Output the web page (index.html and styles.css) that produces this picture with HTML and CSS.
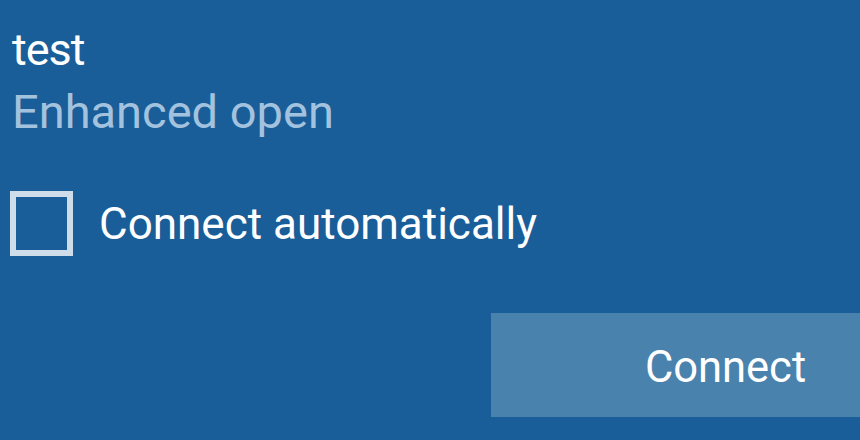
FILE: index.html
```html
<!DOCTYPE html>
<html lang="en">
<head>
<meta charset="utf-8">
<title>Network</title>
<link rel="stylesheet" href="styles.css">
</head>
<body>
<div class="flyout">
  <div class="network">
    <div class="name">test</div>
    <div class="security">Enhanced open</div>
    <label class="auto">
      <span class="box"></span>
      <span class="auto-text">Connect automatically</span>
    </label>
  </div>
  <div class="actions">
    <button class="connect" type="button">Connect</button>
  </div>
</div>
</body>
</html>
```

FILE: styles.css
```css
html, body {
  margin: 0;
  padding: 0;
  background: #195e99;
  overflow: hidden;
}

.flyout {
  width: 860px;
  height: 440px;
  overflow: hidden;
  background: #195e99;
  font-family: Roboto, "Noto Sans", sans-serif;
  font-weight: 400;
  color: #ffffff;
}

.network {
  padding: 24px 0 0 12px;
}

.name {
  font-size: 45px;
  line-height: 52px;
  letter-spacing: -1px;
  color: #ffffff;
}

.security {
  font-size: 47px;
  line-height: 72px;
  color: #a3c2de;
}

.auto {
  display: flex;
  align-items: center;
  gap: 26px;
  margin-top: 43px;
  margin-left: -2px;
}

.box {
  box-sizing: border-box;
  width: 63px;
  height: 65px;
  border: 6px solid #cfdcea;
  flex: none;
}

.auto-text {
  font-size: 44px;
  line-height: 52px;
  color: #ffffff;
}

.actions {
  display: flex;
  margin-top: 57px;
  padding-left: 491px;
}

.connect {
  flex: none;
  width: 469px;
  height: 104px;
  padding: 6px 0 0 0;
  border: none;
  background: #4a82ae;
  color: #ffffff;
  font-family: Roboto, "Noto Sans", sans-serif;
  font-weight: 400;
  font-size: 43.5px;
  line-height: 52px;
  text-align: center;
}
```
